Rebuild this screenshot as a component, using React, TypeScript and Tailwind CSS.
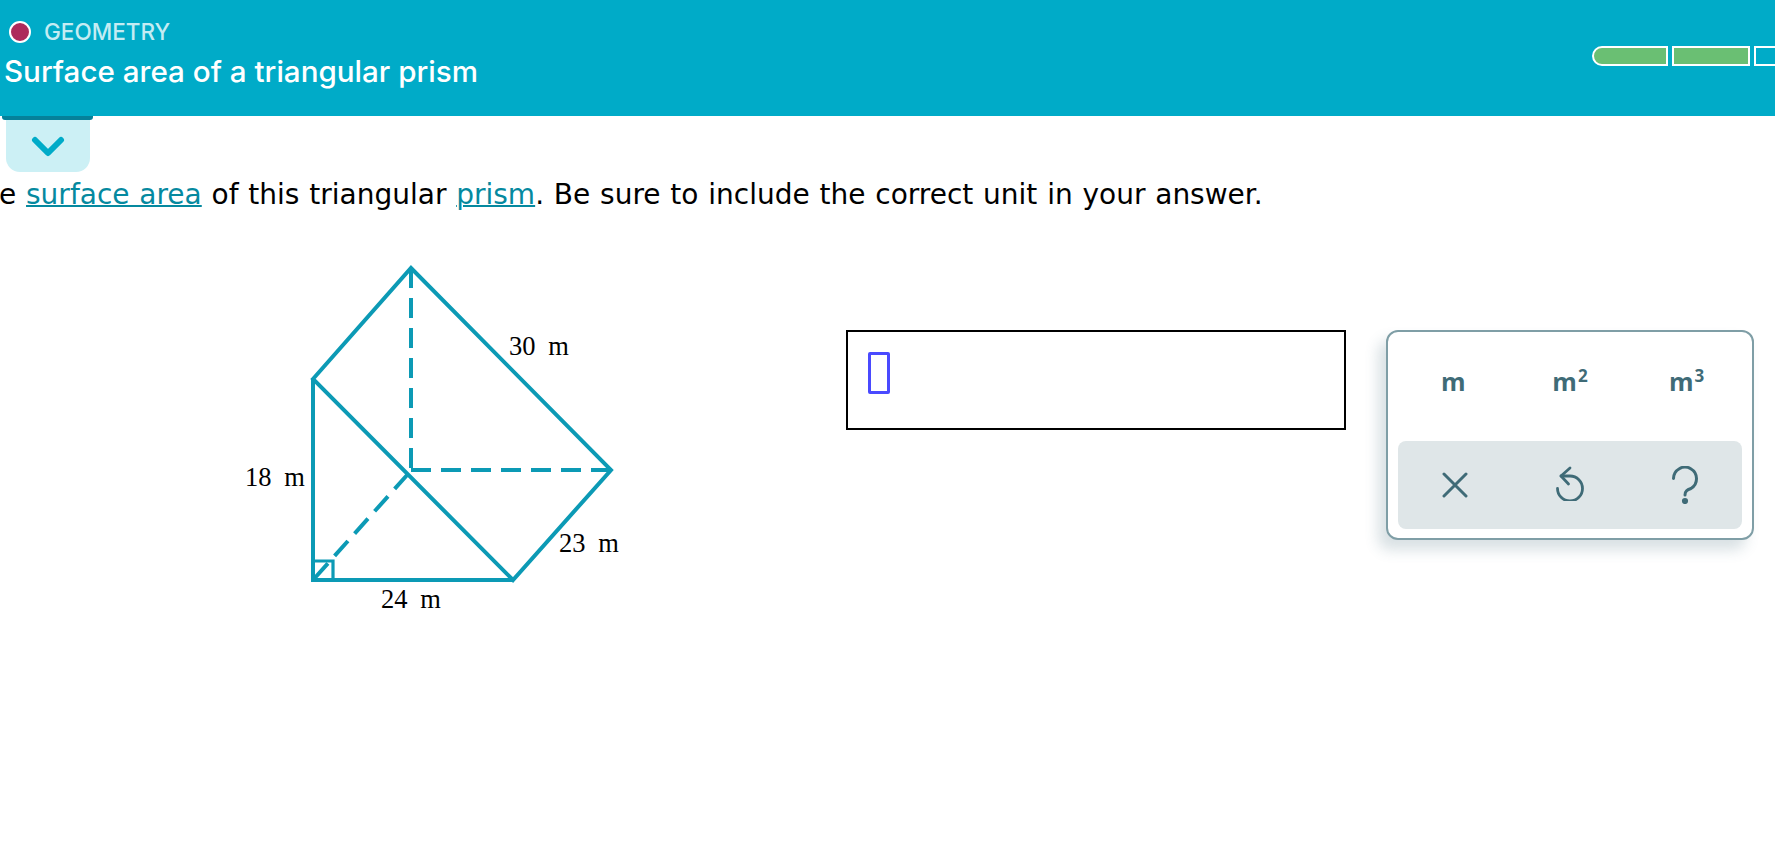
import React from "react";

function Prism() {
  return (
    <svg width="420" height="380" viewBox="0 0 420 380" className="shrink-0">
      <g fill="none" stroke="#0c9ab5" strokeWidth="4" strokeLinejoin="miter">
        <path d="M93 129 L191 18 L391 220 L293 330 L93 129 Z" />
        <path d="M93 129 V330 H293" />
        <path d="M191 18 V220" strokeDasharray="20 10" />
        <path d="M191 220 H391" strokeDasharray="20 10" />
        <path d="M188 224 L93 330" strokeDasharray="20 10" />
      </g>
      <path d="M93 311 H113 V330" fill="none" stroke="#0c9ab5" strokeWidth="3.2" />
      <g fontFamily="'Liberation Serif', serif" fontSize="26.5" fill="#000" style={{ wordSpacing: "6px" }}>
        <text x="289" y="105">30 m</text>
        <text x="25" y="236">18 m</text>
        <text x="339" y="302">23 m</text>
        <text x="161" y="358">24 m</text>
      </g>
    </svg>
  );
}

function Key({ children }: { children: React.ReactNode }) {
  return <div className="flex-1 flex items-center justify-center">{children}</div>;
}

function Sup({ children }: { children: React.ReactNode }) {
  return <span className="text-[17px] leading-none relative top-[-9px] ml-[1px]">{children}</span>;
}

export default function App() {
  return (
    <div className="w-[1775px] h-[847px] overflow-hidden bg-white">
      <header className="h-[116px] bg-[#00abc8] flex items-start justify-between pl-[4px]" style={{ fontFamily: "Inter, sans-serif" }}>
        <div className="pt-[21px]">
          <div className="flex items-center gap-[13px] pl-[5px] h-[22px]">
            <span className="w-[22px] h-[22px] rounded-full bg-[#ad2a5b] border-2 border-white" />
            <span className="text-[22.5px] leading-[22px] font-medium text-[#c4ecf3]">GEOMETRY</span>
          </div>
          <div className="mt-[10px] text-[29.6px] leading-[36px] font-medium text-white">Surface area of a triangular prism</div>
        </div>
        <div className="flex gap-[4px] pt-[46px] shrink-0 w-[183px]">
          <div className="w-[76px] h-[20px] shrink-0 border-2 border-white bg-[#6abf73] rounded-l-[10px]" />
          <div className="w-[78px] h-[20px] shrink-0 border-2 border-white bg-[#6abf73]" />
          <div className="w-[78px] h-[20px] shrink-0 border-2 border-white" />
        </div>
      </header>

      <div className="pl-[2px]">
        <div className="w-[91px] h-[4px] bg-[#05819a] rounded-b-[3px]" />
      </div>
      <div className="pl-[6px]">
        <div className="w-[84px] h-[52px] bg-[#ccf0f5] rounded-b-[14px] flex justify-center pt-[16px]">
          <svg width="34" height="22" viewBox="0 0 34 22" fill="none">
            <path d="M4 4 L17 17 L30 4" stroke="#00abc8" strokeWidth="6" strokeLinecap="round" strokeLinejoin="round" />
          </svg>
        </div>
      </div>

      <p className="mt-[5px] ml-[-1px] whitespace-nowrap text-[28px] leading-[36px] text-black" style={{ fontFamily: "'DejaVu Sans', sans-serif", wordSpacing: "0.9px" }}>
        e <a className="text-[#05899f] underline decoration-2">surface area</a> of this triangular <a className="text-[#05899f] underline decoration-2">prism</a>. Be sure to include the correct unit in your answer.
      </p>

      <div className="flex items-start mt-[37px]">
        <div className="ml-[220px] w-[626px] shrink-0">
          <Prism />
        </div>
        <div className="w-[500px] h-[100px] mt-[80px] border-2 border-black shrink-0 pl-[20px] pt-[20px]">
          <div className="w-[22px] h-[42px] border-[3px] border-[#4a4aff] rounded-[2px]" />
        </div>
        <div className="ml-[40px] mt-[80px] w-[368px] h-[210px] shrink-0 border-2 border-[#7f9ea6] rounded-[12px] bg-white shadow-[-8px_10px_14px_rgba(63,107,119,0.2)] flex flex-col px-[10px] pb-[9px]">
          <div className="flex-1 flex -mx-[3px] pb-[9px] text-[#3f6b77] font-bold text-[25px]" style={{ fontFamily: "'Open Sans', sans-serif" }}>
            <Key>m</Key>
            <Key><span>m<Sup>2</Sup></span></Key>
            <Key><span>m<Sup>3</Sup></span></Key>
          </div>
          <div className="h-[88px] bg-[#dfe6e8] rounded-[8px] flex">
            <Key>
              <svg width="26" height="26" viewBox="0 0 26 26" fill="none" stroke="#3f6b77" strokeWidth="3" strokeLinecap="round"><path d="M2 2 L24 24 M24 2 L2 24" /></svg>
            </Key>
            <Key>
              <div className="pb-[4px]">
                <svg width="30" height="36" viewBox="0 0 30 36" fill="none" stroke="#3f6b77" strokeWidth="2.8" strokeLinecap="round" strokeLinejoin="round"><path d="M6 11 H15 A12.5 12.5 0 1 1 2.5 23.5" /><path d="M15 3 L6 11 L13.5 19" /></svg>
              </div>
            </Key>
            <Key>
              <svg width="28" height="38" viewBox="0 0 28 38" fill="none" stroke="#3f6b77" strokeWidth="3" strokeLinecap="round"><path d="M2.5 12.5 A11.5 11.5 0 1 1 20 22.5 C16 24 14 25 14 29" /><circle cx="14" cy="35" r="1.6" fill="#3f6b77" /></svg>
            </Key>
          </div>
        </div>
      </div>
    </div>
  );
}
